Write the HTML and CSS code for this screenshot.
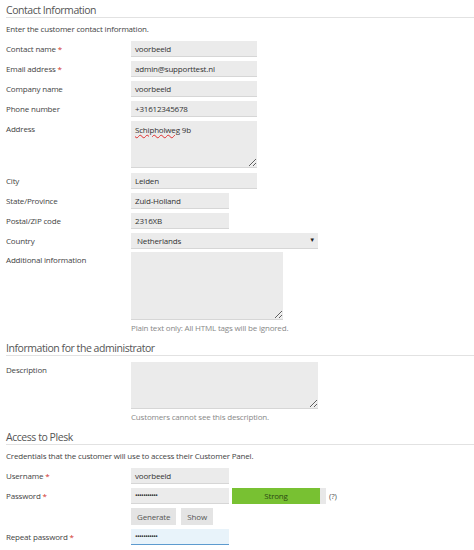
FILE: index.html
```html
<!DOCTYPE html>
<html>
<head>
<meta charset="utf-8">
<link rel="stylesheet" href="styles.css">
</head>
<body>
<h2 class="sec-title">Contact Information</h2>
<p class="intro">Enter the customer contact information.</p>

<div class="row"><div class="label">Contact name <span class="req">*</span></div><div class="input w-l">voorbeeld</div></div>
<div class="row"><div class="label">Email address <span class="req">*</span></div><div class="input w-l">admin@supporttest.nl</div></div>
<div class="row"><div class="label">Company name</div><div class="input w-l">voorbeeld</div></div>
<div class="row"><div class="label">Phone number</div><div class="input w-l">+31612345678</div></div>
<div class="row"><div class="label">Address</div><div class="textarea ta-address"><span class="spell">Schipholweg</span> 9b</div></div>
<div class="row"><div class="label">City</div><div class="input w-l">Leiden</div></div>
<div class="row"><div class="label">State/Province</div><div class="input w-s">Zuid-Holland</div></div>
<div class="row"><div class="label">Postal/ZIP code</div><div class="input w-s">2316XB</div></div>
<div class="row row-country"><div class="label">Country</div><div class="input select"><span>Netherlands</span><span class="arrow">&#9660;</span></div></div>
<div class="row"><div class="label">Additional information</div>
  <div class="field"><div class="textarea ta-info"></div><div class="hint">Plain text only: All HTML tags will be ignored.</div></div>
</div>

<h2 class="sec-title sec-next">Information for the administrator</h2>
<div class="row row-first"><div class="label">Description</div>
  <div class="field"><div class="textarea ta-desc"></div><div class="hint">Customers cannot see this description.</div></div>
</div>

<h2 class="sec-title sec-next">Access to Plesk</h2>
<p class="intro">Credentials that the customer will use to access their Customer Panel.</p>
<div class="row"><div class="label">Username <span class="req">*</span></div><div class="input w-s">voorbeeld</div></div>
<div class="row"><div class="label">Password <span class="req">*</span></div>
  <div class="input w-s pw">&bull;&bull;&bull;&bull;&bull;&bull;&bull;&bull;&bull;&bull;&bull;</div>
  <div class="strength"><div class="strength-fill">Strong</div></div>
  <div class="help">(?)</div>
</div>
<div class="row buttons"><div class="label"></div><button class="btn">Generate</button><button class="btn">Show</button></div>
<div class="row"><div class="label">Repeat password <span class="req">*</span></div><div class="input w-s pw focus">&bull;&bull;&bull;&bull;&bull;&bull;&bull;&bull;&bull;&bull;&bull;</div></div>
</body>
</html>
```

FILE: styles.css
```css
html, body {
  margin: 0;
  padding: 0;
  background: #fff;
}
body {
  font-family: "Open Sans", "Noto Sans", sans-serif;
  font-size: 8px;
  letter-spacing: -0.18px;
  color: #444;
  padding-left: 6px;
  overflow: hidden;
}
.sec-title {
  margin: 0;
  font-weight: normal;
  font-size: 10.5px;
  letter-spacing: -0.45px;
  line-height: 14px;
  padding-top: 3px;
  color: #555;
  border-bottom: 1px solid #e2e2e2;
}
.sec-next {
  margin-top: 3px;
}
.intro {
  margin: 5px 0 6px;
  line-height: 12px;
  color: #444;
}
.row {
  display: flex;
  align-items: flex-start;
  margin-bottom: 4px;
}
.row-country {
  margin-bottom: 3px;
}
.row-first {
  margin-top: 6px;
}
.label {
  width: 125px;
  flex: none;
  line-height: 16px;
  color: #444;
}
.req {
  color: #d0312d;
}
.input {
  box-sizing: border-box;
  height: 16px;
  line-height: 15px;
  padding: 0 4px;
  background: #ebebeb;
  border-bottom: 1px solid #d6d6d6;
  color: #333;
  white-space: nowrap;
}
.w-l { width: 126px; }
.w-s { width: 98px; }
.select {
  width: 187px;
  display: flex;
  justify-content: space-between;
  padding: 0 3px 0 6px;
}
.arrow {
  font-size: 6px;
  color: #222;
}
.textarea {
  box-sizing: border-box;
  background: #ebebeb;
  border-bottom: 1px solid #d6d6d6;
  padding: 3px 4px;
  line-height: 12px;
  color: #333;
  resize: both;
  overflow: hidden;
}
.ta-address {
  width: 126px;
  height: 47px;
  margin-bottom: 1px;
}
.spell {
  text-decoration: underline wavy #e03030;
  text-decoration-thickness: 1px;
  text-underline-offset: 1px;
}
.ta-info {
  width: 152px;
  height: 68px;
}
.ta-desc {
  width: 187px;
  height: 47px;
}
.hint {
  margin-top: 2px;
  line-height: 12px;
  color: #888;
}
.pw {
  letter-spacing: -0.6px;
  font-size: 7px;
}
.strength {
  margin-left: 3px;
  width: 94px;
  height: 16px;
  background: #e8e8e8;
}
.strength-fill {
  width: 88px;
  height: 16px;
  line-height: 16px;
  background: #78c132;
  color: #2d4a12;
  text-align: center;
}
.help {
  margin-left: 3px;
  line-height: 16px;
  color: #555;
}
.buttons {
  margin-top: 1px;
}
.btn {
  font-family: inherit;
  font-size: 8px;
  letter-spacing: -0.18px;
  height: 17px;
  padding: 0 6px;
  margin: 0 5px 0 0;
  border: none;
  background: #e4e4e4;
  color: #555;
}
.focus {
  background: #e8f3fa;
  border-bottom: 1px solid #5d9bcf;
}
```
